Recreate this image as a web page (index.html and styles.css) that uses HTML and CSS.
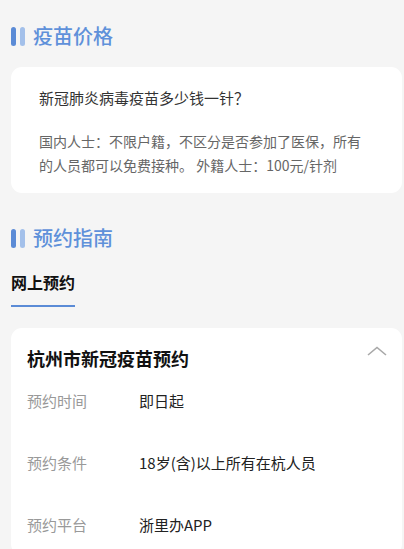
FILE: index.html
```html
<!DOCTYPE html>
<html lang="zh-CN">
<head>
<meta charset="utf-8">
<title>疫苗</title>
<link rel="stylesheet" href="styles.css">
</head>
<body>
<div class="page">
  <div class="section-title">
    <span class="bar bar-dark"></span><span class="bar bar-light"></span>
    <span class="section-text">疫苗价格</span>
  </div>
  <div class="card price-card">
    <div class="question">新冠肺炎病毒疫苗多少钱一针？</div>
    <div class="answer">国内人士：不限户籍，不区分是否参加了医保，所有的人员都可以免费接种。 外籍人士：100元/针剂</div>
  </div>

  <div class="section-title second">
    <span class="bar bar-dark"></span><span class="bar bar-light"></span>
    <span class="section-text">预约指南</span>
  </div>
  <div class="tabs">
    <span class="tab active">网上预约</span>
  </div>
  <div class="card guide-card">
    <div class="guide-head">
      <div class="guide-title">杭州市新冠疫苗预约</div>
      <svg class="chevron" width="20" height="10" viewBox="0 0 20 10"><polyline points="1,9 10,1.5 19,9" fill="none" stroke="#a8a8a8" stroke-width="1.6"/></svg>
    </div>
    <div class="rows">
      <div class="row"><span class="label">预约时间</span><span class="value">即日起</span></div>
      <div class="row"><span class="label">预约条件</span><span class="value">18岁(含)以上所有在杭人员</span></div>
      <div class="row"><span class="label">预约平台</span><span class="value">浙里办APP</span></div>
    </div>
  </div>
</div>
</body>
</html>
```

FILE: styles.css
```css
html, body {
  margin: 0;
  padding: 0;
  background: #f5f5f5;
}
body {
  font-family: "Noto Sans CJK SC", "Noto Sans", "Liberation Sans", sans-serif;
  overflow: hidden;
}
.page {
  padding: 26px 2px 0 11px;
}
.section-title {
  display: flex;
  align-items: center;
  height: 20px;
}
.section-title.second {
  margin-top: 35px;
}
.bar {
  display: block;
  width: 5px;
  height: 19px;
  border-radius: 3px;
}
.bar-dark {
  background: #5b8bd6;
}
.bar-light {
  background: #a3c0ea;
  margin-left: 4px;
}
.section-text {
  margin-left: 8px;
  font-size: 20px;
  line-height: 20px;
  font-weight: 500;
  color: #5f91da;
}
.card {
  background: #fff;
  border-radius: 11px;
}
.price-card {
  margin-top: 21px;
  padding: 20px 28px 16px 28px;
}
.question {
  font-size: 15px;
  line-height: 22px;
  color: #333;
}
.answer {
  margin-top: 20px;
  font-size: 14px;
  line-height: 24px;
  color: #666;
}
.tabs {
  margin-top: 22px;
}
.tab {
  display: inline-block;
  font-size: 16px;
  line-height: 22px;
  font-weight: 700;
  color: #111;
  padding-bottom: 12px;
  border-bottom: 2px solid #5b8bd6;
}
.guide-card {
  margin-top: 21px;
  padding: 18px 15px 20px 16px;
}
.guide-head {
  display: flex;
  justify-content: space-between;
  align-items: flex-start;
}
.guide-title {
  font-size: 18px;
  line-height: 24px;
  font-weight: 700;
  color: #111;
}
.chevron {
  display: block;
  margin-top: 0;
}
.rows {
  margin-top: 21px;
  display: flex;
  flex-direction: column;
  gap: 42px;
}
.row {
  display: grid;
  grid-template-columns: 112px 1fr;
  font-size: 15px;
  line-height: 20px;
}
.label {
  color: #999;
}
.value {
  color: #222;
}
```
